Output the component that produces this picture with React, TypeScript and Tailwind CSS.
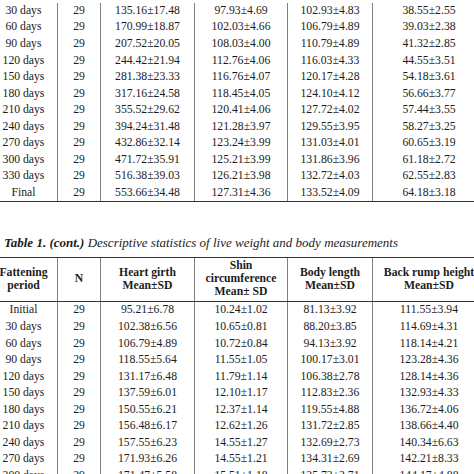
const top = [
  ['30 days', '29', '135.16±17.48', '97.93±4.69', '102.93±4.83', '38.55±2.55'],
  ['60 days', '29', '170.99±18.87', '102.03±4.66', '106.79±4.89', '39.03±2.38'],
  ['90 days', '29', '207.52±20.05', '108.03±4.00', '110.79±4.89', '41.32±2.85'],
  ['120 days', '29', '244.42±21.94', '112.76±4.06', '116.03±4.33', '44.55±3.51'],
  ['150 days', '29', '281.38±23.33', '116.76±4.07', '120.17±4.28', '54.18±3.61'],
  ['180 days', '29', '317.16±24.58', '118.45±4.05', '124.10±4.12', '56.66±3.77'],
  ['210 days', '29', '355.52±29.62', '120.41±4.06', '127.72±4.02', '57.44±3.55'],
  ['240 days', '29', '394.24±31.48', '121.28±3.97', '129.55±3.95', '58.27±3.25'],
  ['270 days', '29', '432.86±32.14', '123.24±3.99', '131.03±4.01', '60.65±3.19'],
  ['300 days', '29', '471.72±35.91', '125.21±3.99', '131.86±3.96', '61.18±2.72'],
  ['330 days', '29', '516.38±39.03', '126.21±3.98', '132.72±4.03', '62.55±2.83'],
  ['Final', '29', '553.66±34.48', '127.31±4.36', '133.52±4.09', '64.18±3.18'],
]

const bottom = [
  ['Initial', '29', '95.21±6.78', '10.24±1.02', '81.13±3.92', '111.55±3.94'],
  ['30 days', '29', '102.38±6.56', '10.65±0.81', '88.20±3.85', '114.69±4.31'],
  ['60 days', '29', '106.79±4.89', '10.72±0.84', '94.13±3.92', '118.14±4.21'],
  ['90 days', '29', '118.55±5.64', '11.55±1.05', '100.17±3.01', '123.28±4.36'],
  ['120 days', '29', '131.17±6.48', '11.79±1.14', '106.38±2.78', '128.14±4.36'],
  ['150 days', '29', '137.59±6.01', '12.10±1.17', '112.83±2.36', '132.93±4.33'],
  ['180 days', '29', '150.55±6.21', '12.37±1.14', '119.55±4.88', '136.72±4.06'],
  ['210 days', '29', '156.48±6.17', '12.62±1.26', '131.72±2.85', '138.66±4.40'],
  ['240 days', '29', '157.55±6.23', '14.55±1.27', '132.69±2.73', '140.34±6.63'],
  ['270 days', '29', '171.93±6.26', '14.55±1.21', '134.31±2.69', '142.21±8.33'],
  ['300 days', '29', '171.47±5.58', '15.51±1.18', '135.73±2.71', '144.17±4.88'],
]

// column widths; the first column starts 10px left of the visible edge
const widths = ['w-[68px]', 'w-[43px]', 'w-[94px]', 'w-[93px]', 'w-[85px]', 'w-[112px]']

function Cell({ i, children, className = '' }: { i: number; children: React.ReactNode; className?: string }) {
  return (
    <div
      className={`${widths[i]} shrink-0 flex flex-col items-center justify-center whitespace-nowrap ${
        i < 5 ? 'border-r-[1.5px] border-[#808080]' : ''
      } ${className}`}
    >
      {children}
    </div>
  )
}

function Row({ cells }: { cells: string[] }) {
  return (
    <div className="flex h-[16.55px] leading-none">
      {cells.map((c, i) => (
        <Cell key={i} i={i}>
          {c}
        </Cell>
      ))}
    </div>
  )
}

const header = [
  ['Fattening', 'period'],
  ['N'],
  ['Heart girth', 'Mean±SD'],
  ['Shin', 'circumference', 'Mean± SD'],
  ['Body length', 'Mean±SD'],
  ['Back rump height', 'Mean±SD'],
]

export default function App() {
  return (
    <div className="w-[474px] h-[474px] overflow-hidden bg-white text-[#1c1c1c] text-[11.7px] font-['Liberation_Serif','Times_New_Roman',serif]">
      <div className="-ml-[10px] w-[495px]">
        <div className="pt-[2.5px] border-b border-[#333]">
          {top.map((r) => (
            <Row key={r[0]} cells={r} />
          ))}
        </div>

        <p className="mt-[34px] ml-[14px] text-[13px] italic leading-none whitespace-nowrap">
          <b>Table 1. (cont.)</b> Descriptive statistics of live weight and body measurements
        </p>

        <div className="mt-[8px] border-t border-[#333]">
          <div className="flex h-[44px] border-b border-[#333] font-bold leading-[12.8px]">
            {header.map((lines, i) => (
              <Cell key={i} i={i}>
                {lines.map((l) => (
                  <div key={l}>{l}</div>
                ))}
              </Cell>
            ))}
          </div>
          {bottom.map((r) => (
            <Row key={r[0]} cells={r} />
          ))}
        </div>
      </div>
    </div>
  )
}
